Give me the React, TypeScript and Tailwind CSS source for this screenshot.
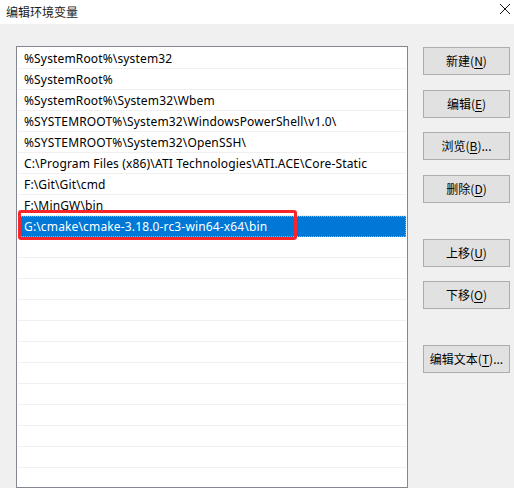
const paths = [
  '%SystemRoot%\\system32',
  '%SystemRoot%',
  '%SystemRoot%\\System32\\Wbem',
  '%SYSTEMROOT%\\System32\\WindowsPowerShell\\v1.0\\',
  '%SYSTEMROOT%\\System32\\OpenSSH\\',
  'C:\\Program Files (x86)\\ATI Technologies\\ATI.ACE\\Core-Static',
  'F:\\Git\\Git\\cmd',
  'F:\\MinGW\\bin',
  'G:\\cmake\\cmake-3.18.0-rc3-win64-x64\\bin',
]

const SELECTED = 8
const ROW_COUNT = 21

const buttons = [
  { label: '新建', key: 'N', tail: '', mt: 'mt-0' },
  { label: '编辑', key: 'E', tail: '', mt: 'mt-[15px]' },
  { label: '浏览', key: 'B', tail: '...', mt: 'mt-[14px]' },
  { label: '删除', key: 'D', tail: '', mt: 'mt-[15px]' },
  { label: '上移', key: 'U', tail: '', mt: 'mt-[36px]' },
  { label: '下移', key: 'O', tail: '', mt: 'mt-[14px]' },
  { label: '编辑文本', key: 'T', tail: '...', mt: 'mt-[36px]' },
]

export default function App() {
  const rows = Array.from({ length: ROW_COUNT }, (_, i) => paths[i] ?? '')

  return (
    <div className="relative flex h-[488px] w-[514px] flex-col overflow-hidden bg-[#f0f0f0] font-['Noto_Sans','Noto_Sans_CJK_SC',sans-serif] text-[12px] text-black">
      {/* Title bar */}
      <div className="flex h-[24px] shrink-0 items-center justify-between bg-white pl-[6px] pr-[2px]">
        <span className="font-['Noto_Sans_CJK_SC',sans-serif] text-[12px] leading-none text-[#1a1a1a]">编辑环境变量</span>
        <svg width="12" height="12" viewBox="0 0 12 12" className="mb-[6px] mr-[1px]">
          <path d="M1 1 L11 11 M11 1 L1 11" stroke="#111" strokeWidth="1" fill="none" />
        </svg>
      </div>

      {/* Body */}
      <div className="flex pl-[16px] pt-[22px]">
        {/* List */}
        <div className="h-[442px] w-[392px] shrink-0 overflow-hidden border border-[#828790] bg-white p-[1px]">
          {rows.map((text, i) => (
            <div
              key={i}
              className={
                i === SELECTED
                  ? 'flex h-[21px] items-center bg-[#0078d7] pl-[6px] pt-[1px] text-white outline outline-1 -outline-offset-1 outline-dotted outline-[#e8a04c]'
                  : 'flex h-[21px] items-center border-b border-[#f0f0f0] pl-[6px] pt-[1px]'
              }
            >
              <span className="whitespace-nowrap tracking-[0.15px]">{text}</span>
            </div>
          ))}
        </div>

        {/* Buttons */}
        <div className="ml-[15px] flex flex-col pt-[1px]">
          {buttons.map((b) => (
            <button
              key={b.key}
              className={`${b.mt} flex h-[28px] w-[87px] items-center justify-center border border-[#adadad] bg-[#e1e1e1] font-['Noto_Sans_CJK_SC',sans-serif] text-[12px] leading-none text-black`}
            >
              {b.label}(<span className="underline underline-offset-2">{b.key}</span>){b.tail}
            </button>
          ))}
        </div>
      </div>

      {/* Red annotation around the selected entry */}
      <div className="absolute left-[18px] top-[210px] h-[30px] w-[279px] rounded-[3px] border-[3px] border-[#f8262b]" />
    </div>
  )
}
